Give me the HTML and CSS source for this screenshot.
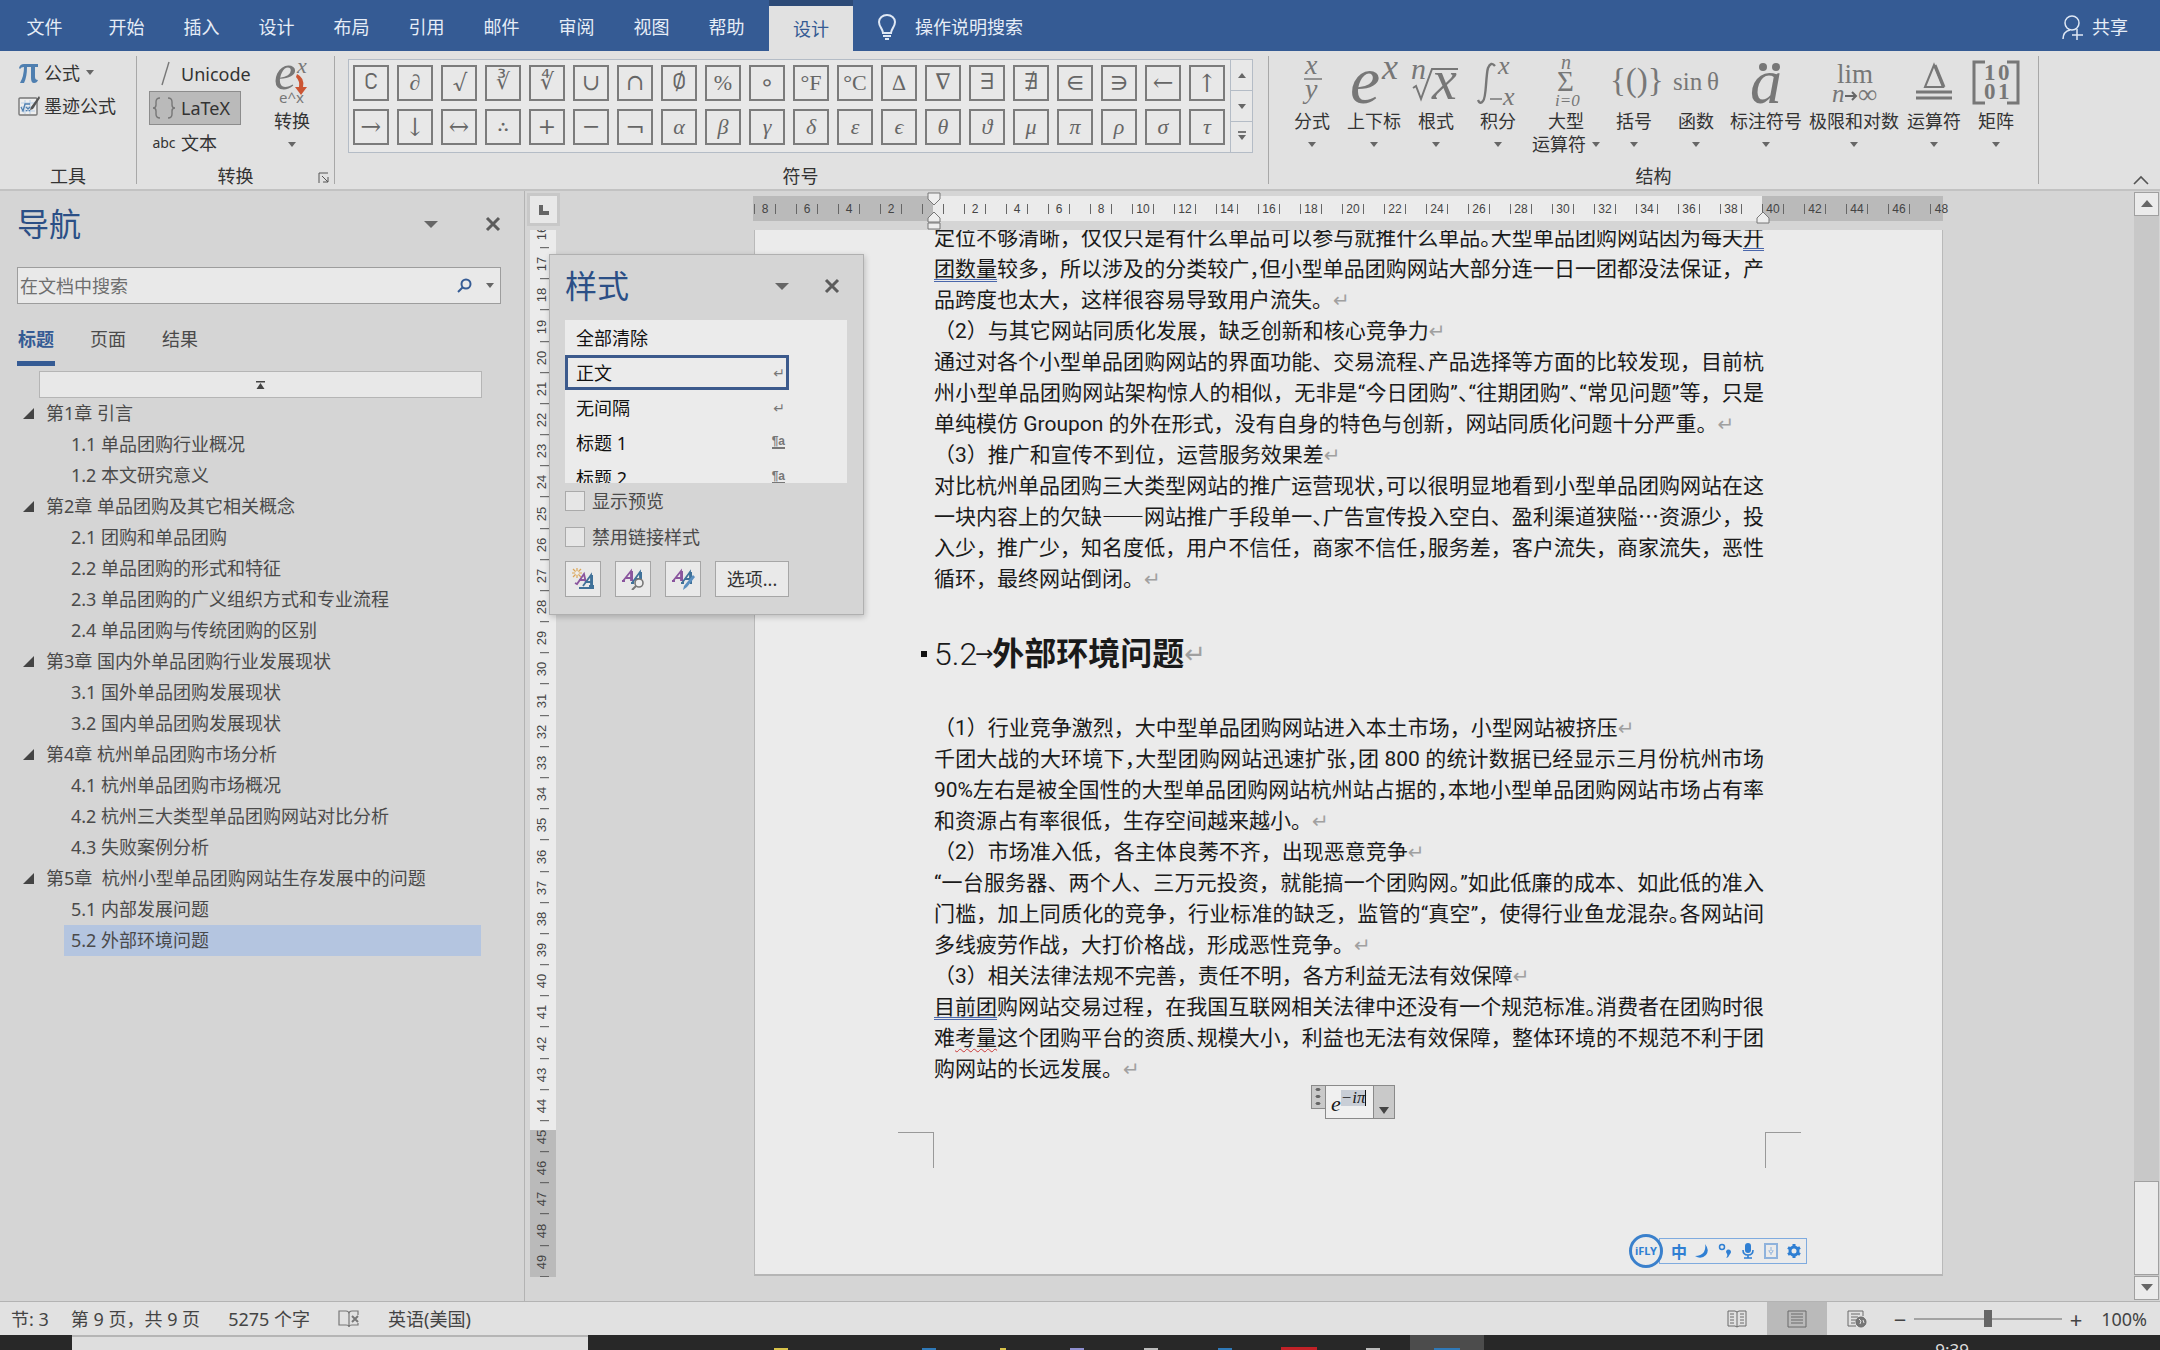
FILE: index.html
```html
<!DOCTYPE html>
<html lang="zh-CN">
<head>
    <meta charset="utf-8">
    <title>Word</title>
    <link rel="stylesheet" href="styles.css">
</head>
<body>
    <!-- Tab bar -->
    <header class="tabs">
        <button class="tab file">文件</button>
        <button class="tab">开始</button>
        <button class="tab">插入</button>
        <button class="tab">设计</button>
        <button class="tab">布局</button>
        <button class="tab">引用</button>
        <button class="tab">邮件</button>
        <button class="tab">审阅</button>
        <button class="tab">视图</button>
        <button class="tab">帮助</button>
        <button class="tab active">设计</button>
        <button class="tell-me">
            <svg width="18" height="26" viewBox="0 0 18 26" fill="none" stroke="#dfe8f5" stroke-width="2"><path d="M5 19c0-4-4-6-4-11a8 7 0 0 1 16 0c0 5-4 7-4 11zM5 22h8M7 25h4"/></svg>
            操作说明搜索
        </button>
        <button class="share">
            <svg width="22" height="25" viewBox="0 0 22 25" fill="none" stroke="#dfe8f5" stroke-width="1.5"><circle cx="10" cy="8" r="7"/><path d="M1 24c0-5 3-8 7-9M15 14v11M10 20h11"/></svg>
            共享
        </button>
    </header>

    <!-- Ribbon -->
    <div class="ribbon">
        <section class="group tools">
            <div class="group-body">
                <button class="row-btn">
                    <svg width="22" height="22" viewBox="0 0 22 22"><path d="M1 6q1-4 5-4h14v3h-3v10q0 3 3 3-1 3-4 3-3 0-3-5V5H9q0 10-3 16H2Q6 14 6 5 3 5 2 7z" fill="#4f7fb0"/></svg>
                    公式<i class="caret"></i>
                </button>
                <button class="row-btn">
                    <svg width="22" height="22" viewBox="0 0 22 22" fill="none"><rect x="1" y="3" width="18" height="17" rx="1" fill="#eee" stroke="#777" stroke-width="1.4"/><path d="M3 8h14M3 12h14M3 16h14M7 5v14M12 5v14" stroke="#b9cfe6"/><path d="M3 12l2 4 2-7h5M8 12l4 4m0-4l-4 4" stroke="#4f7fb0" stroke-width="1.3"/><path d="M21 1l-8 11-1 3 3-1 7-11z" fill="#555"/></svg>
                    墨迹公式
                </button>
            </div>
            <h2>工具</h2>
        </section>

        <section class="group convert">
            <div class="group-body">
                <div class="modes">
                    <button class="mode"><svg width="26" height="30" viewBox="0 0 26 30" fill="none" stroke="#777" stroke-width="1.4"><path d="M18 3l-7 23"/></svg>Unicode</button>
                    <button class="mode on"><svg width="26" height="30" viewBox="0 0 26 30" fill="none" stroke="#777" stroke-width="1.4"><path d="M9 5q-4 0-4 4v3q0 3-3 3 3 0 3 3v3q0 4 4 4M17 5q4 0 4 4v3q0 3 3 3-3 0-3 3v3q0 4-4 4"/></svg>LaTeX</button>
                    <button class="mode"><span class="abc">abc</span>文本</button>
                </div>
                <button class="big">
                    <svg class="math" width="44" height="46" viewBox="0 0 44 46"><text x="4" y="29" font-size="50">e</text><text x="27" y="13" font-size="22">x</text><path d="M27 14q8 4 6 13h4l-6 8-6-8h4q1-6-3-10z" fill="#cc5533"/><text class="plain" x="9" y="43" font-size="15">e^x</text></svg>
                    <span>转换</span><i class="caret"></i>
                </button>
            </div>
            <h2>转换</h2>
            <button class="launcher" aria-label="转换选项"><svg width="12" height="12" viewBox="0 0 12 12" fill="none" stroke="#555"><path d="M1 11V1h9M4 4l6 6M10 5v5H5"/></svg></button>
        </section>

        <section class="group symbols">
            <div class="group-body">
                <div class="gallery">
                    <div class="grid">
                        <button>∁</button><button><i>∂</i></button><button>√</button><button>∛</button><button>∜</button>
                        <button>∪</button><button>∩</button><button>∅</button><button class="serif">%</button><button>∘</button>
                        <button class="serif">°F</button><button class="serif">°C</button><button class="serif">∆</button><button>∇</button><button>∃</button>
                        <button>∄</button><button>∈</button><button>∋</button><button>←</button><button>↑</button>
                        <button>→</button><button>↓</button><button>↔</button><button>∴</button><button>+</button>
                        <button>−</button><button>¬</button><button><i>α</i></button><button><i>β</i></button><button><i>γ</i></button>
                        <button><i>δ</i></button><button><i>ε</i></button><button><i>ϵ</i></button><button><i>θ</i></button><button><i>ϑ</i></button>
                        <button><i>μ</i></button><button><i>π</i></button><button><i>ρ</i></button><button><i>σ</i></button><button><i>τ</i></button>
                    </div>
                    <div class="gallery-scroll">
                        <button aria-label="向上"><i class="caret up"></i></button>
                        <button aria-label="向下"><i class="caret"></i></button>
                        <button aria-label="其他"><i class="caret more"></i></button>
                    </div>
                </div>
            </div>
            <h2>符号</h2>
        </section>

        <section class="group structures">
            <div class="group-body">
                <button class="big">
                    <svg class="math" width="60" height="46" viewBox="0 0 60 46"><text x="23" y="14" font-size="28">x</text><path d="M22 19h18" stroke="#777" stroke-width="1.5"/><text x="23" y="38" font-size="28">y</text></svg>
                    <span>分式</span><i class="caret"></i>
                </button>
                <button class="big">
                    <svg class="math" width="60" height="46" viewBox="0 0 60 46"><text x="6" y="43" font-size="68">e</text><text x="38" y="19" font-size="36">x</text></svg>
                    <span>上下标</span><i class="caret"></i>
                </button>
                <button class="big">
                    <svg class="math" width="60" height="46" viewBox="0 0 60 46"><text x="5" y="19" font-size="30">n</text><path d="M7 28l3-2 5 13L26 9h26" fill="none" stroke="#777" stroke-width="2"/><text x="26" y="39" font-size="56">x</text></svg>
                    <span>根式</span><i class="caret"></i>
                </button>
                <button class="big">
                    <svg class="math" width="60" height="46" viewBox="0 0 60 46"><path d="M27 6q-4-5-7 2-1 3-2 17-1 14-3 16-3 4-5-1" fill="none" stroke="#777" stroke-width="2.4"/><text x="30" y="14" font-size="26">x</text><path d="M22 39h12" stroke="#777" stroke-width="1.5"/><text x="35" y="45" font-size="26">x</text></svg>
                    <span>积分</span><i class="caret"></i>
                </button>
                <button class="big wide">
                    <svg class="math" width="60" height="46" viewBox="0 0 60 46"><text x="25" y="9" font-size="20">n</text><text class="plain" x="21" y="31" font-size="29">Σ</text><text x="19" y="46" font-size="17">i=0</text></svg>
                    <span>大型</span><span class="second">运算符<i class="caret"></i></span>
                </button>
                <button class="big">
                    <svg class="math" width="60" height="46" viewBox="0 0 60 46"><text class="plain" x="6" y="31" font-size="33">{()}</text></svg>
                    <span>括号</span><i class="caret"></i>
                </button>
                <button class="big">
                    <svg class="math" width="60" height="46" viewBox="0 0 60 46"><text class="plain" x="7" y="30" font-size="25">sin</text><text class="plain" x="41" y="30" font-size="25">θ</text></svg>
                    <span>函数</span><i class="caret"></i>
                </button>
                <button class="big accent">
                    <svg class="math" width="60" height="46" viewBox="0 0 60 46"><text x="14" y="43" font-size="64">a</text><circle cx="27" cy="7" r="4" fill="#777"/><circle cx="40" cy="7" r="4" fill="#777"/></svg>
                    <span>标注符号</span><i class="caret"></i>
                </button>
                <button class="big limit">
                    <svg class="math" width="60" height="46" viewBox="0 0 60 46"><text class="plain" x="13" y="23" font-size="27">lim</text><text x="8" y="42" font-size="25">n</text><path d="M21 36h10M28 32l4 4-4 4" fill="none" stroke="#666" stroke-width="2"/><text class="plain" x="34" y="43" font-size="27">∞</text></svg>
                    <span>极限和对数</span><i class="caret"></i>
                </button>
                <button class="big">
                    <svg class="math" width="60" height="46" viewBox="0 0 60 46"><path d="M21 27L30 5l9 22z" fill="none" stroke="#777" stroke-width="2"/><path d="M31 5l9 22" stroke="#777" stroke-width="3"/><path d="M12 32h36M12 38h36" stroke="#777" stroke-width="3"/></svg>
                    <span>运算符</span><i class="caret"></i>
                </button>
                <button class="big">
                    <svg class="math" width="60" height="46" viewBox="0 0 60 46"><path d="M19 2H8v41h11M41 2h11v41H41" fill="none" stroke="#777" stroke-width="3"/><text class="plain num" x="18" y="20" font-size="23">1</text><text class="plain num" x="32" y="20" font-size="23">0</text><text class="plain num" x="18" y="39" font-size="23">0</text><text class="plain num" x="32" y="39" font-size="23">1</text></svg>
                    <span>矩阵</span><i class="caret"></i>
                </button>
            </div>
            <h2>结构</h2>
        </section>
        <button class="collapse" aria-label="折叠功能区"><svg width="16" height="10" viewBox="0 0 16 10" fill="none" stroke="#555" stroke-width="1.6"><path d="M1 9l7-7 7 7"/></svg></button>
    </div>

    <main class="workspace">
        <!-- Navigation pane -->
        <aside class="nav">
            <div class="pane-title">
                <h1>导航</h1>
                <button aria-label="选项"><i class="caret big-caret"></i></button>
                <button aria-label="关闭"><svg width="16" height="16" viewBox="0 0 16 16" stroke="#5c5c5c" stroke-width="3"><path d="M2 2l12 12M14 2L2 14"/></svg></button>
            </div>
            <div class="search">
                <input type="text" placeholder="在文档中搜索" aria-label="在文档中搜索">
                <svg width="15" height="15" viewBox="0 0 15 15" fill="none" stroke="#355b94" stroke-width="2"><circle cx="9" cy="6" r="4.5"/><path d="M6 9l-5 5"/></svg>
                <i class="caret"></i>
            </div>
            <div class="nav-tabs">
                <button class="current">标题</button>
                <button>页面</button>
                <button>结果</button>
            </div>
            <button class="jump" aria-label="跳到开头"><svg width="9" height="8" viewBox="0 0 9 8"><path d="M0 0h9v1.500H0zM4.500 2L8.500 8h-8z" fill="#444"/></svg></button>
            <ul class="tree">
                <li><a class="chapter" href="#">第1章 引言</a></li>
                <li><a href="#">1.1 单品团购行业概况</a></li>
                <li><a href="#">1.2 本文研究意义</a></li>
                <li><a class="chapter" href="#">第2章 单品团购及其它相关概念</a></li>
                <li><a href="#">2.1 团购和单品团购</a></li>
                <li><a href="#">2.2 单品团购的形式和特征</a></li>
                <li><a href="#">2.3 单品团购的广义组织方式和专业流程</a></li>
                <li><a href="#">2.4 单品团购与传统团购的区别</a></li>
                <li><a class="chapter" href="#">第3章 国内外单品团购行业发展现状</a></li>
                <li><a href="#">3.1 国外单品团购发展现状</a></li>
                <li><a href="#">3.2 国内单品团购发展现状</a></li>
                <li><a class="chapter" href="#">第4章 杭州单品团购市场分析</a></li>
                <li><a href="#">4.1 杭州单品团购市场概况</a></li>
                <li><a href="#">4.2 杭州三大类型单品团购网站对比分析</a></li>
                <li><a href="#">4.3 失败案例分析</a></li>
                <li><a class="chapter" href="#">第5章 &nbsp;杭州小型单品团购网站生存发展中的问题</a></li>
                <li><a href="#">5.1 内部发展问题</a></li>
                <li><a class="selected" href="#">5.2 外部环境问题</a></li>
            </ul>
        </aside>

        <div class="side-ruler">
            <button class="tab-stop" aria-label="制表符"><svg width="10" height="10" viewBox="0 0 10 10"><path d="M0 0h4v6h6v4H0z" fill="#666"/></svg></button>
            <div class="v-ruler"><div class="v-marks">
                <span>16</span><span>17</span><span>18</span><span>19</span><span>20</span><span>21</span><span>22</span><span>23</span><span>24</span><span>25</span><span>26</span><span>27</span><span>28</span><span>29</span><span>30</span><span>31</span><span>32</span><span>33</span><span>34</span><span>35</span><span>36</span><span>37</span><span>38</span><span>39</span><span>40</span><span>41</span><span>42</span><span>43</span><span>44</span><span>45</span><span>46</span><span>47</span><span>48</span><span>49</span>
            </div></div>
        </div>

        <div class="canvas">
            <div class="sheet">
                <div class="h-ruler">
                    <div class="h-marks">
                        <span>8</span><span>6</span><span>4</span><span>2</span><span></span><span>2</span><span>4</span><span>6</span><span>8</span><span>10</span><span>12</span><span>14</span><span>16</span><span>18</span><span>20</span><span>22</span><span>24</span><span>26</span><span>28</span><span>30</span><span>32</span><span>34</span><span>36</span><span>38</span><span>40</span><span>42</span><span>44</span><span>46</span><span class="last">48</span>
                    </div>
                    <svg class="indent left" width="14" height="38" viewBox="0 0 14 38" fill="#eee" stroke="#777"><path d="M1 1h12v6l-6 6-6-6zM7 20l6 6v4H1v-4zM1 31h12v6H1z"/></svg>
                    <svg class="indent right" width="14" height="38" viewBox="0 0 14 38" fill="#eee" stroke="#777"><path d="M7 20l6 6v5H1v-5z"/></svg>
                </div>

                <div class="viewport">
                <article class="page">
                    <div class="text">
                        <p class="full">定位不够清晰，仅仅只是有什么单品可以参与就推什么单品<span class="half">。</span>大型单品团购网站因为每天<span class="grammar">开</span></p>
                        <p class="full"><span class="grammar">团数量</span>较多，所以涉及的分类较广<span class="half">，</span>但小型单品团购网站大部分连一日一团都没法保证，产</p>
                        <p>品跨度也太大，这样很容易导致用户流失。<span class="mark">↵</span></p>
                        <p>（2）与其它网站同质化发展，缺乏创新和核心竞争力<span class="mark">↵</span></p>
                        <p class="full">通过对各个小型单品团购网站的界面功能、交易流程<span class="half">、</span>产品选择等方面的比较发现，目前杭</p>
                        <p class="full">州小型单品团购网站架构惊人的相似，无非是“今日团购”<span class="half">、</span>“往期团购”<span class="half">、</span>“常见问题”等，只是</p>
                        <p>单纯模仿 Groupon 的外在形式，没有自身的特色与创新，网站同质化问题十分严重。<span class="mark">↵</span></p>
                        <p>（3）推广和宣传不到位，运营服务效果差<span class="mark">↵</span></p>
                        <p class="full">对比杭州单品团购三大类型网站的推广运营现状<span class="half">，</span>可以很明显地看到小型单品团购网站在这</p>
                        <p class="full">一块内容上的欠缺<span class="cjk">——</span>网站推广手段单一<span class="half">、</span>广告宣传投入空白、盈利渠道狭隘<span class="cjk">…</span>资源少，投</p>
                        <p class="full">入少，推广少，知名度低，用户不信任，商家不信任<span class="half">，</span>服务差，客户流失，商家流失，恶性</p>
                        <p>循环，最终网站倒闭。<span class="mark">↵</span></p>

                        <h3><span class="number">5.2</span><span class="arrow">→</span>外部环境问题<span class="mark">↵</span></h3>

                        <p>（1）行业竞争激烈，大中型单品团购网站进入本土市场，小型网站被挤压<span class="mark">↵</span></p>
                        <p class="full">千团大战的大环境下<span class="half">，</span>大型团购网站迅速扩张<span class="half">，</span>团 800 的统计数据已经显示三月份杭州市场</p>
                        <p class="full">90%左右是被全国性的大型单品团购网站杭州站占据的<span class="half">，</span>本地小型单品团购网站市场占有率</p>
                        <p>和资源占有率很低，生存空间越来越小。<span class="mark">↵</span></p>
                        <p>（2）市场准入低，各主体良莠不齐，出现恶意竞争<span class="mark">↵</span></p>
                        <p class="full">“一台服务器、两个人、三万元投资，就能搞一个团购网<span class="half">。</span>”如此低廉的成本、如此低的准入</p>
                        <p class="full">门槛，加上同质化的竞争，行业标准的缺乏，监管的“真空”，使得行业鱼龙混杂<span class="half">。</span>各网站间</p>
                        <p>多线疲劳作战，大打价格战，形成恶性竞争。<span class="mark">↵</span></p>
                        <p>（3）相关法律法规不完善，责任不明，各方利益无法有效保障<span class="mark">↵</span></p>
                        <p class="full"><span class="grammar">目前团</span>购网站交易过程，在我国互联网相关法律中还没有一个规范标准<span class="half">。</span>消费者在团购时很</p>
                        <p class="full">难<span class="spelling">考量</span>这个团购平台的资质<span class="half">、</span>规模大小，利益也无法有效保障，整体环境的不规范不利于团</p>
                        <p>购网站的长远发展。<span class="mark">↵</span></p>

                        <div class="equation">
                            <span class="handle"></span>
                            <span class="formula">e<sup>−iπ</sup></span>
                            <button aria-label="公式选项"><i class="caret"></i></button>
                        </div>
                        <div class="corners"><span></span><span></span></div>
                    </div>
                </article>
                </div>
            </div>
        </div>

        <div class="scrollbar">
            <button aria-label="向上滚动"><i class="caret up"></i></button>
            <div class="track"><div class="thumb"></div></div>
            <button aria-label="向下滚动"><i class="caret"></i></button>
        </div>

        <!-- Floating styles pane -->
        <section class="styles-pane">
            <div class="pane-title">
                <h1>样式</h1>
                <button aria-label="选项"><i class="caret big-caret"></i></button>
                <button aria-label="关闭"><svg width="16" height="16" viewBox="0 0 16 16" stroke="#5c5c5c" stroke-width="3"><path d="M2 2l12 12M14 2L2 14"/></svg></button>
            </div>
            <ul class="style-list">
                <li>全部清除</li>
                <li class="chosen">正文<span class="return">↵</span></li>
                <li>无间隔<span class="return">↵</span></li>
                <li>标题 1<span class="linked">¶a</span></li>
                <li>标题 2<span class="linked">¶a</span></li>
            </ul>
            <label><input type="checkbox">显示预览</label>
            <label><input type="checkbox">禁用链接样式</label>
            <div class="style-actions">
                <button aria-label="新建样式"><svg width="24" height="22" viewBox="0 0 24 22"><path d="M6 0v10M1 5h10M2 1l8 8M10 1L2 9" stroke="#dca657" stroke-width="1.2"/><circle cx="6" cy="5" r="2" fill="#eee"/><path d="M4 15l2 1L13 6l2 9M8 12h7" fill="none" stroke="#8a559e" stroke-width="1.8"/><path d="M12 18l8-11v11M15 14h5" fill="none" stroke="#3f7199" stroke-width="1.8"/><path d="M21 7v11M8 20h15M18 18h5" stroke="#3f7199" stroke-width="2"/></svg></button>
                <button aria-label="样式检查器"><svg width="24" height="22" viewBox="0 0 24 22"><path d="M1 13h3M2 13L10 3v10M5 10h5" fill="none" stroke="#8a559e" stroke-width="1.8"/><path d="M11 3v10" stroke="#8a559e" stroke-width="2"/><path d="M10 15h3M11 15l8-11v10M14 11h5" fill="none" stroke="#3f7199" stroke-width="1.8"/><path d="M20 4v12" stroke="#3f7199" stroke-width="2"/><circle cx="18" cy="15" r="4" fill="#eee" stroke="#777" stroke-width="1.6"/><path d="M15 18l-4 4" stroke="#777" stroke-width="2"/></svg></button>
                <button aria-label="管理样式"><svg width="24" height="22" viewBox="0 0 24 22"><path d="M1 13h3M2 13L10 3v10M5 10h5" fill="none" stroke="#8a559e" stroke-width="1.8"/><path d="M11 3v10" stroke="#8a559e" stroke-width="2"/><path d="M10 15h3M11 15l8-11v10M14 11h5" fill="none" stroke="#3f7199" stroke-width="1.8"/><path d="M20 4v12" stroke="#3f7199" stroke-width="2"/><path d="M24 9l-8 10-4 3 1-4 9-11z" fill="#5b8fc0"/></svg></button>
                <button class="options">选项...</button>
            </div>
        </section>

        <!-- Input method bar -->
        <div class="ime">
            <span class="ifly">iFLY</span>
            <div class="ime-bar">
                <span>中</span>
                <svg width="16" height="16" viewBox="0 0 16 16"><path d="M11 1q5 6 1 11-5 5-11 1 6 0 9-4 2-4 1-8z" fill="#2f7fd3"/></svg>
                <svg width="16" height="16" viewBox="0 0 16 16"><circle cx="5" cy="4" r="2.500" fill="none" stroke="#2f7fd3" stroke-width="1.500"/><path d="M9 9a2.500 2.500 0 1 1 4 2q-1 3-4 4 2-2 1-4z" fill="#2f7fd3"/></svg>
                <svg width="16" height="16" viewBox="0 0 16 16"><rect x="5" y="0" width="6" height="10" rx="3" fill="#2f7fd3"/><path d="M3 7q0 5 5 5t5-5M8 12v3M4 15h8" fill="none" stroke="#2f7fd3" stroke-width="1.600"/></svg>
                <svg width="16" height="16" viewBox="0 0 16 16" fill="none" stroke="#8fb2dc"><rect x="2" y="1" width="12" height="14" stroke-width="2"/><path d="M8 4v4M6 7q0 3 2 3t2-3M8 10v2"/></svg>
                <svg width="16" height="16" viewBox="0 0 16 16" fill="none" stroke="#2f7fd3"><circle cx="8" cy="8" r="4" stroke-width="3"/><path d="M8 1v3M8 12v3M2 4.500l2.500 1.500M11.500 10l2.500 1.500M2 11.500L4.500 10M11.500 6L14 4.500" stroke-width="3"/></svg>
            </div>
        </div>
    </main>

    <footer class="status">
        <span>节: 3</span>
        <span>第 9 页，共 9 页</span>
        <span>5275 个字</span>
        <svg width="22" height="18" viewBox="0 0 22 18" fill="none" stroke="#777" stroke-width="1.2"><path d="M1 1h7q3 0 3 3v13q0-2-3-2H1zM11 4q0-3 3-3h6v4M20 13v2h-6q-3 0-3 2"/><path d="M14 6l6 6M20 6l-6 6" stroke-width="2"/></svg>
        <span>英语(美国)</span>
        <div class="views">
            <button aria-label="阅读视图"><svg width="20" height="18" viewBox="0 0 20 18" fill="none" stroke="#6a6a6a"><path d="M10 2L8 1H1v15h7l2 1 2-1h7V1h-7zM10 2v15M3 4h4M3 7h4M3 10h4M3 13h4M13 4h4M13 7h4M13 10h4M13 13h4"/></svg></button>
            <button class="on" aria-label="页面视图"><svg width="20" height="18" viewBox="0 0 20 18" fill="none" stroke="#6a6a6a"><path d="M1 1h18v16H1zM4 4h12M4 7h12M4 10h12M4 13h12"/></svg></button>
            <button aria-label="Web 版式视图"><svg width="20" height="18" viewBox="0 0 20 18" fill="none" stroke="#6a6a6a"><path d="M16 6V1H1v15h8M4 4h9M4 7h7M4 10h5M4 13h4"/><circle cx="14" cy="12" r="5" fill="#777"/><path d="M12 9l2 2-1 3M16 10l1 3" stroke="#e1e1e1"/></svg></button>
        </div>
        <div class="zoom">
            <button aria-label="缩小">−</button>
            <input type="range" min="0" max="100" value="50" aria-label="缩放">
            <button aria-label="放大">+</button>
            <span>100%</span>
        </div>
    </footer>

    <!-- Top edge of the desktop task bar -->
    <div class="taskbar">
        <div class="task-search"></div>
        <div class="apps">
            <span class="dot yellow"></span>
            <span class="dot none"></span>
            <span class="dot blue"></span>
            <span class="dot yellow small"></span>
            <span class="dot violet"></span>
            <span class="dot pale"></span>
            <span class="dot blue"></span>
            <span class="dot red"></span>
            <span class="dot grey"></span>
            <span class="dot word"></span>
        </div>
        <time>9:39</time>
    </div>
</body>
</html>
```
FILE: styles.css
```css
* {
    box-sizing: border-box;
}
body {
    margin: 0;
    height: 100vh;
    display: flex;
    flex-direction: column;
    overflow: hidden;
    font-family: "Noto Sans", "Noto Sans CJK SC", sans-serif;
    font-size: 18px;
    line-height: 22px;
    color: #333;
    background: #d5d5d5;
}
button {
    font: inherit;
    color: inherit;
    background: none;
    border: none;
    padding: 0;
    margin: 0;
}
h1, h2, h3, p, ul {
    margin: 0;
    padding: 0;
    font-weight: normal;
}
ul {
    list-style: none;
}
svg {
    display: block;
    flex: none;
}
.caret {
    display: inline-block;
    flex: none;
    border: 4px solid transparent;
    border-top: 5px solid #666;
    border-bottom: 0;
}
.caret.up {
    border-top: 0;
    border-bottom: 5px solid #666;
}
.caret.more {
    position: relative;
}
.caret.more::before {
    content: "";
    position: absolute;
    left: -4px;
    top: -9px;
    width: 8px;
    height: 2px;
    background: #777;
}
.big-caret {
    border-width: 7px;
    border-bottom-width: 0;
}

/* tab bar */
.tabs {
    flex: none;
    display: flex;
    height: 51px;
    background: #355b94;
    color: #e6edf7;
}
.tab {
    width: 75px;
    padding-top: 3px;
}
.tab.file {
    width: 89px;
}
.tab.active {
    width: 84px;
    margin-left: 5px;
    padding-top: 0;
    background: #e1e1e1;
    border-top: 6px solid #2c4a77;
    color: #355b94;
}
.tell-me, .share {
    display: flex;
    align-items: center;
    padding-top: 3px;
    gap: 19px;
    margin-left: 25px;
}
.share {
    gap: 8px;
    margin-left: auto;
    margin-right: 32px;
}

/* ribbon */
.ribbon {
    flex: none;
    display: flex;
    position: relative;
    height: 140px;
    padding-top: 5px;
    background: #e1e1e1;
    border-bottom: 2px solid #c2c2c2;
}
.group {
    position: relative;
    height: 128px;
    border-right: 1px solid #a8a8a8;
}
.group-body {
    display: flex;
    height: 109px;
}
.group h2 {
    font-size: 18px;
    line-height: 22px;
    text-align: center;
}
.tools {
    width: 137px;
}
.tools .group-body {
    flex-direction: column;
    padding-left: 18px;
}
.row-btn {
    display: flex;
    align-items: center;
    gap: 4px;
    height: 33px;
}
.row-btn .caret {
    margin-left: 2px;
}
.convert {
    width: 198px;
}
.modes {
    padding-left: 12px;
}
.mode {
    display: flex;
    align-items: center;
    width: 102px;
    height: 35px;
    gap: 4px;
    padding-left: 2px;
    white-space: nowrap;
}
.mode.on {
    width: 92px;
    height: 34px;
    padding-left: 1px;
    background: #bababa;
    border: 1px solid #8c8c8c;
}
.abc {
    width: 26px;
    font-size: 14px;
}
.big {
    display: flex;
    flex-direction: column;
    align-items: center;
    width: 62px;
    height: 100px;
    padding-top: 4px;
    white-space: nowrap;
}
.big > span {
    line-height: 22px;
    margin-top: 4px;
}
.big > .caret {
    margin-top: 10px;
}
.big .second {
    display: flex;
    align-items: center;
    gap: 6px;
    margin-top: 1px;
}
.big.wide {
    width: 74px;
}
.big.accent {
    width: 78px;
}
.big.limit {
    width: 98px;
}
.math {
    overflow: visible;
    fill: #777;
    font-family: "Liberation Serif", serif;
    font-style: italic;
}
.math .plain {
    font-style: normal;
}
.math .num {
    font-weight: bold;
}
.convert .math .plain {
    font-family: "Noto Sans", sans-serif;
}
.convert .big {
    width: 72px;
    margin-left: 5px;
}
.launcher {
    position: absolute;
    right: 4px;
    bottom: 0;
}
.symbols {
    width: 934px;
    padding: 3px 15px 0 13px;
}
.symbols .group-body {
    height: 106px;
}
.gallery {
    display: flex;
    justify-content: space-between;
    width: 905px;
    height: 94px;
    background: #e8e8e8;
    border: 1px solid #b4bcc6;
}
.grid {
    display: grid;
    grid-template-columns: repeat(20, 36px);
    grid-auto-rows: 36px;
    gap: 8px;
    padding: 5px 4px;
}
.grid button {
    border: 2px solid #7b7b7b;
    font-family: "DejaVu Math TeX Gyre", "Liberation Serif", "DejaVu Sans", serif;
    font-size: 22px;
    line-height: 30px;
    color: #666;
}
.grid i, .grid .serif {
    font-family: "Liberation Serif", serif;
}
.gallery-scroll {
    display: grid;
    width: 22px;
    border-left: 1px solid #b4bcc6;
}
.gallery-scroll button {
    display: flex;
    align-items: center;
    justify-content: center;
}
.gallery-scroll button + button {
    border-top: 1px solid #b4bcc6;
}
.structures {
    width: 770px;
}
.structures .group-body {
    padding-left: 12px;
}
.collapse {
    position: absolute;
    right: 11px;
    bottom: 4px;
}

/* workspace */
.workspace {
    position: relative;
    flex: 1;
    min-height: 0;
    display: flex;
}
.nav {
    flex: none;
    width: 525px;
    padding: 15px 23px 0 17px;
    border-right: 1px solid #b3b3b3;
    color: #4a4a4a;
}
.pane-title {
    display: flex;
    align-items: center;
    height: 36px;
}
.pane-title h1 {
    flex: 1;
    font-size: 32px;
    line-height: 36px;
    color: #2b4f86;
}
.pane-title button {
    display: flex;
    margin-left: 47px;
}
.search {
    display: flex;
    align-items: center;
    height: 37px;
    margin-top: 25px;
    padding: 0 6px 0 2px;
    background: #e9e9e9;
    border: 1px solid #9d9d9d;
}
.search input {
    flex: 1;
    border: none;
    background: none;
    font: inherit;
    padding: 0;
}
.search input::placeholder {
    color: #6e6e6e;
}
.search .caret {
    margin-left: 14px;
}
.nav-tabs {
    display: flex;
    gap: 34px;
    height: 41px;
    margin-top: 21px;
}
.nav-tabs button {
    padding: 0 1px 8px;
    border-bottom: 5px solid transparent;
}
.nav-tabs .current {
    font-weight: bold;
    color: #355b94;
    border-color: #355b94;
}
.jump {
    display: flex;
    align-items: center;
    justify-content: center;
    width: 443px;
    height: 27px;
    margin: 5px 0 0 22px;
    background: #e8e8e8;
    border: 1px solid #b5b5b5;
}
.tree {
    margin-right: 20px;
}
.tree a {
    display: block;
    margin-left: 47px;
    padding-left: 7px;
    line-height: 31px;
    color: #4a4a4a;
    text-decoration: none;
    white-space: nowrap;
}
.tree .chapter {
    display: flex;
    align-items: center;
    margin-left: 6px;
    padding: 0;
    white-space: pre;
}
.tree .chapter::before {
    content: "";
    margin-right: 12px;
    border-left: 11px solid transparent;
    border-bottom: 11px solid #444;
}
.tree .selected {
    background: #b4c5e0;
}

/* rulers */
.side-ruler {
    flex: none;
    display: flex;
    flex-direction: column;
    width: 35px;
    padding: 2px 0 24px 2px;
}
.tab-stop {
    display: flex;
    align-items: center;
    justify-content: center;
    width: 33px;
    height: 33px;
    background: #e8e8e8;
    border: 3px solid #c8c8c8;
}
.v-ruler {
    flex: 1;
    min-height: 0;
    display: flex;
    flex-direction: column;
    justify-content: flex-end;
    width: 26px;
    margin: 4px 0 0 3px;
    overflow: hidden;
    background: linear-gradient(#ebebeb 86%, #bababa 86%);
}
.v-marks {
    flex: none;
    display: grid;
    grid-auto-rows: 1fr;
    height: 1060px;
    font: 13px/15px "Liberation Sans", sans-serif;
    color: #444;
}
.v-marks span {
    position: relative;
    writing-mode: vertical-rl;
    transform: rotate(180deg);
    text-align: center;
    padding-right: 4px;
}
.v-marks span::after {
    content: "";
    position: absolute;
    top: 0;
    left: 7px;
    width: 9px;
    height: 1px;
    background: #555;
}
.canvas {
    flex: 1;
    display: flex;
    justify-content: center;
    padding: 5px 0 25px 2px;
    overflow: hidden;
}
.sheet {
    flex: none;
    display: flex;
    flex-direction: column;
    width: 1190px;
}
.h-ruler {
    flex: none;
    position: relative;
    height: 25px;
    margin-bottom: 9px;
    background: linear-gradient(to right, #bababa 180px, #ebebeb 180px, #ebebeb 1009px, #bababa 1009px);
}
.h-marks {
    display: flex;
    margin-left: -9px;
    padding-top: 8px;
}
.h-marks span {
    flex: none;
    width: 22px;
    height: 10px;
    margin: 0 10px;
    border: 1px solid #666;
    border-width: 0 1px;
    font: 12px/10px "Liberation Sans", sans-serif;
    text-align: center;
    color: #444;
}
.h-marks .last {
    border-right: 0;
    margin-right: 0;
}
.indent {
    position: absolute;
    top: -4px;
    left: 174px;
}
.indent.right {
    left: 1003px;
}

/* document */
.viewport {
    flex: 1;
    min-height: 0;
    overflow: hidden;
    margin-left: 1px;
    background: #ebebeb;
    border: 1px solid #b9b9b9;
    border-top: 0;
    border-bottom: 2px solid #b5b5b5;
}
.text {
    width: 830px;
    margin: -7px auto 0 179px;
    font-family: Roboto, "Noto Sans CJK SC", sans-serif;
    font-size: 21px;
    line-height: 31px;
    font-weight: 300;
    color: #1a1a1a;
}
.text p {
    height: 31px;
    white-space: nowrap;
}
.text .full {
    text-align: justify;
    text-align-last: justify;
}
.half {
    font-feature-settings: "halt";
}
.cjk {
    font-family: "Noto Sans CJK SC", sans-serif;
    line-height: 20px;
}
.grammar {
    text-decoration: underline double #4a67ab 1px;
    text-underline-offset: 3px;
}
.spelling {
    text-decoration: underline wavy #c93636 1px;
    text-underline-offset: 3px;
}
.mark {
    font-family: "DejaVu Sans", sans-serif;
    font-size: 20px;
    line-height: 20px;
    color: #a0a0a0;
}
.text h3 {
    display: flex;
    align-items: center;
    height: 118px;
    font-size: 32px;
    font-weight: bold;
}
.text h3::before {
    content: "";
    width: 6px;
    height: 6px;
    margin: 0 7px 0 -13px;
    background: #111;
}
.text h3 .number {
    font-weight: 300;
}
.text h3 .arrow {
    width: 17px;
    margin-left: -2px;
    font: 22px/32px "DejaVu Sans", sans-serif;
}
.text h3 .mark {
    font-size: 26px;
    font-weight: normal;
}
.equation {
    display: flex;
    align-items: flex-start;
    justify-content: center;
    padding-left: 8px;
}
.handle {
    width: 14px;
    height: 24px;
    background: radial-gradient(#666 2px, transparent 3px) 0 0 / 12px 7px, #c9c9c9;
    border: 1px solid #8a8a8a;
    border-right: 0;
}
.formula {
    width: 49px;
    height: 34px;
    padding-left: 5px;
    background: #f0f0f0;
    border: 1px solid #8a8a8a;
    font: italic 22px/36px "Liberation Serif", serif;
    white-space: nowrap;
}
.formula sup {
    display: inline-block;
    font-size: 17px;
    line-height: 16px;
    vertical-align: 8px;
    background: #c9ced6;
    border-right: 1px solid #111;
}
.equation button {
    width: 21px;
    height: 34px;
    padding-top: 12px;
    background: #c9c9c9;
    border: 1px solid #8a8a8a;
    border-left: 0;
    line-height: 10px;
}
.equation .caret {
    border-width: 7px 5px 0;
    border-top-color: #444;
}
.corners {
    display: flex;
    justify-content: space-between;
    margin: 13px -37px 0 -36px;
}
.corners span {
    width: 36px;
    height: 36px;
    border: 1px solid #999;
    border-width: 1px 1px 0 0;
}
.corners span + span {
    border-width: 1px 0 0 1px;
}

/* scrollbar */
.scrollbar {
    flex: none;
    display: flex;
    flex-direction: column;
    width: 26px;
    padding: 1px 1px 1px 0;
}
.scrollbar button, .thumb {
    flex: none;
    height: 24px;
    background: #ebebeb;
    border: 1px solid #a0a0a0;
}
.scrollbar .caret {
    border-width: 7px 6px 0;
    margin-bottom: 4px;
}
.scrollbar .caret.up {
    border-width: 0 6px 7px;
}
.track {
    flex: 1;
    display: flex;
    flex-direction: column;
    justify-content: flex-end;
    background: #c8c8c8;
}
.thumb {
    height: 94px;
    margin-bottom: 1px;
}

/* styles pane */
.styles-pane {
    position: absolute;
    left: 549px;
    top: 63px;
    width: 315px;
    padding: 13px 16px 17px 15px;
    background: #d5d5d5;
    border: 1px solid #b0b0b0;
    box-shadow: 1px 2px 6px rgba(0, 0, 0, 0.2);
}
.styles-pane .pane-title {
    padding-right: 7px;
}
.styles-pane .pane-title button {
    margin-left: 35px;
}
.style-list {
    height: 163px;
    margin-top: 16px;
    overflow: hidden;
    background: #ebebeb;
    color: #111;
}
.style-list li {
    display: flex;
    align-items: center;
    justify-content: space-between;
    width: 224px;
    height: 35px;
    padding: 0 4px 0 11px;
}
.style-list .chosen {
    padding: 0 1px 0 8px;
    border: 3px solid #3c5a8c;
}
.return {
    font: 14px "DejaVu Sans", sans-serif;
    color: #777;
}
.linked {
    font: bold 12px/11px "Liberation Sans", sans-serif;
    color: #777;
    border-bottom: 2px solid #777;
}
.styles-pane label {
    display: flex;
    align-items: center;
    gap: 7px;
    height: 36px;
    color: #4a4a4a;
}
.styles-pane label input {
    appearance: none;
    width: 20px;
    height: 20px;
    margin: 0;
    background: #e6e6e6;
    border: 1px solid #aaa;
}
.style-actions {
    display: flex;
    gap: 14px;
    margin-top: 6px;
}
.style-actions button {
    display: flex;
    align-items: center;
    justify-content: center;
    width: 36px;
    height: 36px;
    background: #e9e9e9;
    border: 1px solid #a6a6a6;
}
.style-actions .options {
    width: 74px;
}

/* input method bar */
.ime {
    position: absolute;
    right: 353px;
    bottom: 33px;
    display: flex;
    align-items: center;
}
.ifly {
    z-index: 1;
    width: 34px;
    height: 34px;
    margin-right: -4px;
    border: 3px solid #3a80cc;
    border-radius: 50%;
    background: #ebebeb;
    font: bold 11px/28px "Noto Sans", sans-serif;
    text-align: center;
    color: #2f7fd3;
}
.ime-bar {
    display: flex;
    align-items: center;
    gap: 7px;
    height: 26px;
    padding: 0 4px 0 11px;
    border: 1px solid #7fabdf;
    font: bold 16px/24px "Noto Sans CJK SC", sans-serif;
    color: #2f7fd3;
}

/* status bar */
.status {
    flex: none;
    display: flex;
    align-items: center;
    gap: 28px;
    height: 34px;
    padding-left: 11px;
    background: #e1e1e1;
    border-top: 1px solid #b3b3b3;
    color: #444;
}
.status > span:first-child {
    margin-right: -6px;
}
.views {
    display: flex;
    align-self: stretch;
    margin-left: auto;
}
.views button {
    display: flex;
    align-items: center;
    justify-content: center;
    width: 60px;
}
.views .on {
    background: #bababa;
}
.zoom {
    display: flex;
    align-items: center;
    gap: 7px;
    margin-left: -22px;
    padding-right: 13px;
}
.zoom button {
    width: 14px;
    font-size: 22px;
    line-height: 20px;
}
.zoom span {
    margin-left: 11px;
}
.zoom input {
    appearance: none;
    width: 148px;
    height: 17px;
    margin: 0;
    background: linear-gradient(#a3a3a3, #a3a3a3) center / 100% 2px no-repeat;
}
.zoom input::-webkit-slider-thumb {
    appearance: none;
    width: 8px;
    height: 17px;
    background: #666;
}

/* task bar */
.taskbar {
    flex: none;
    display: flex;
    height: 15px;
    padding-right: 7px;
    background: #282828;
    overflow: hidden;
}
.task-search {
    width: 516px;
    margin-left: 72px;
    background: #dedede;
    border-top: 2px solid #b5b5b5;
}
.apps {
    display: flex;
    align-items: flex-end;
    margin-left: 156px;
}
.dot {
    width: 74px;
    height: 2px;
    border: 0 solid transparent;
    border-width: 0 30px;
    background-clip: padding-box;
}
.dot.yellow {
    background-color: #d8c24a;
}
.dot.small {
    border-width: 0 34px;
}
.dot.blue {
    background-color: #2f79b8;
}
.dot.violet {
    background-color: #8f8fd0;
}
.dot.pale, .dot.grey {
    background-color: #bbb;
}
.dot.red {
    height: 3px;
    border-width: 0 19px;
    background-color: #c22127;
}
.dot.word {
    height: 15px;
    border: 0;
    background: linear-gradient(#2f79b8, #2f79b8) center bottom / 26px 2px no-repeat, #4c4c4c;
}
.taskbar time {
    margin-left: auto;
    margin-right: 184px;
    padding-top: 4px;
    font-size: 17px;
    line-height: 22px;
    color: #ddd;
}
```
